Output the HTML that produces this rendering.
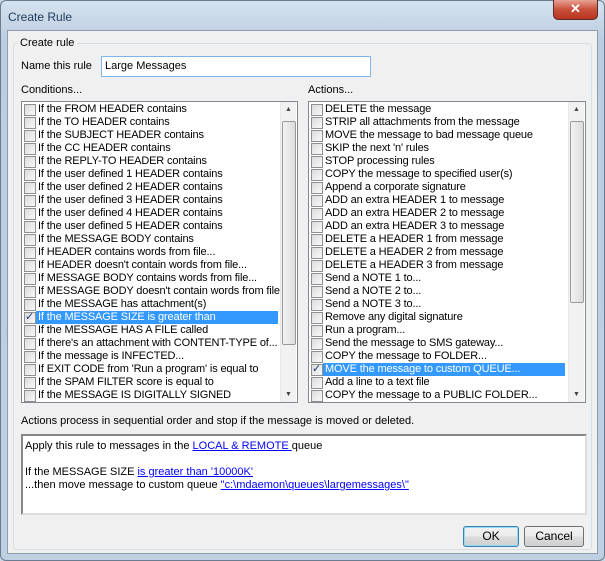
<!DOCTYPE html><html><head><style>
body{margin:0;width:605px;height:561px;overflow:hidden;background:#c9d7e6;font-family:"Liberation Sans",sans-serif;font-size:11px;color:#000}
.win{position:absolute;left:0;top:0;width:603px;height:559px;border:1px solid #6b7c8e;border-radius:6px;background:linear-gradient(#d5e2ef,#bccde0 40px,#bfd0e2);}
.title{position:absolute;left:8px;top:10px;font-size:12px;color:#1e395b}
.close{position:absolute;left:553px;top:0;width:43px;height:19px;border:1px solid #5a2a2a;border-top:none;border-radius:0 0 5px 5px;background:linear-gradient(#e8a293,#c9503b 50%,#b6341f);color:#fff;text-align:center;font-weight:bold;font-size:13px;line-height:18px}
.client{position:absolute;left:7px;top:30px;width:589px;height:522px;background:#f0f0f0;border:1px solid #8d9cae}
.a{position:absolute}
.gb{position:absolute;left:5px;top:12px;width:577px;height:505px;border:1px solid #d5dfe5;border-radius:3px}
.lst{position:absolute;background:#fff;border:1px solid #828790;overflow:hidden}
.row{height:13px;line-height:13px;white-space:nowrap;position:relative;padding-left:16px;letter-spacing:-0.15px}
.row:before{content:"";position:absolute;left:2px;top:1px;width:10px;height:10px;border:1px solid #8f8f8f;background:linear-gradient(135deg,#dcdcdc,#f8f8f8)}
.sel{background:#3399ff;color:#fff}
.chk:after{content:"✓";position:absolute;left:3px;top:0;color:#1c3a78;font-size:11px;line-height:13px}
.sb{position:absolute;top:0;width:15px;bottom:0;background:#f1f1f1;border-left:1px solid #e8e8e8}
.thumb{position:absolute;left:1px;width:12px;border:1px solid #999;border-radius:2px;background:linear-gradient(90deg,#f3f3f3,#dcdcdc)}
.ar{position:absolute;left:0;width:15px;text-align:center;font-size:7px;color:#444}
a{color:#0000ff;text-decoration:underline}
.btn{position:absolute;height:19px;border:1px solid #707070;border-radius:3px;background:linear-gradient(#f2f2f2,#ebebeb 50%,#dddddd 51%,#cfcfcf);text-align:center;line-height:19px;font-size:12px}
</style></head><body>
<div class="win"></div>
<div class="title">Create Rule</div>
<div class="close">✕</div>
<div class="client">
<div class="gb"></div>
<div class="a" style="left:9px;top:6px;background:#f0f0f0;padding:0 3px;font-size:11px">Create rule</div>
<div class="a" style="left:13px;top:29px">Name this rule</div>
<div class="a" style="left:93px;top:25px;width:265px;height:19px;background:#fff;border:1px solid #7eb4ea;line-height:19px;padding-left:3px">Large Messages</div>
<div class="a" style="left:13px;top:53px">Conditions...</div>
<div class="a" style="left:300px;top:53px">Actions...</div>
<div class="lst" style="left:13px;top:70px;width:275px;height:300px">
<div style="padding-top:1px">
<div class="row">If the FROM HEADER contains</div><div class="row">If the TO HEADER contains</div><div class="row">If the SUBJECT HEADER contains</div><div class="row">If the CC HEADER contains</div><div class="row">If the REPLY-TO HEADER contains</div><div class="row">If the user defined 1 HEADER contains</div><div class="row">If the user defined 2 HEADER contains</div><div class="row">If the user defined 3 HEADER contains</div><div class="row">If the user defined 4 HEADER contains</div><div class="row">If the user defined 5 HEADER contains</div><div class="row">If the MESSAGE BODY contains</div><div class="row">If HEADER contains words from file...</div><div class="row">If HEADER doesn't contain words from file...</div><div class="row">If MESSAGE BODY contains words from file...</div><div class="row">If MESSAGE BODY doesn't contain words from file</div><div class="row">If the MESSAGE has attachment(s)</div><div class="row chk"><span class="sel" style="display:block;margin-left:-2px;padding-left:2px;width:240px">If the MESSAGE SIZE is greater than</span></div><div class="row">If the MESSAGE HAS A FILE called</div><div class="row">If there's an attachment with CONTENT-TYPE of...</div><div class="row">If the message is INFECTED...</div><div class="row">If EXIT CODE from 'Run a program' is equal to</div><div class="row">If the SPAM FILTER score is equal to</div><div class="row">If the MESSAGE IS DIGITALLY SIGNED</div>
</div>
<div class="sb" style="left:258px"><div class="ar" style="top:4px">▲</div><div class="thumb" style="top:19px;height:222px"></div><div class="ar" style="bottom:4px">▼</div></div>
</div>
<div class="lst" style="left:300px;top:70px;width:276px;height:300px">
<div style="padding-top:1px">
<div class="row">DELETE the message</div><div class="row">STRIP all attachments from the message</div><div class="row">MOVE the message to bad message queue</div><div class="row">SKIP the next 'n' rules</div><div class="row">STOP processing rules</div><div class="row">COPY the message to specified user(s)</div><div class="row">Append a corporate signature</div><div class="row">ADD an extra HEADER 1 to message</div><div class="row">ADD an extra HEADER 2 to message</div><div class="row">ADD an extra HEADER 3 to message</div><div class="row">DELETE a HEADER 1 from message</div><div class="row">DELETE a HEADER 2 from message</div><div class="row">DELETE a HEADER 3 from message</div><div class="row">Send a NOTE 1 to...</div><div class="row">Send a NOTE 2 to...</div><div class="row">Send a NOTE 3 to...</div><div class="row">Remove any digital signature</div><div class="row">Run a program...</div><div class="row">Send the message to SMS gateway...</div><div class="row">COPY the message to FOLDER...</div><div class="row chk"><span class="sel" style="display:block;margin-left:-2px;padding-left:2px;width:240px">MOVE the message to custom QUEUE...</span></div><div class="row">Add a line to a text file</div><div class="row">COPY the message to a PUBLIC FOLDER...</div>
</div>
<div class="sb" style="left:259px"><div class="ar" style="top:4px">▲</div><div class="thumb" style="top:19px;height:180px"></div><div class="ar" style="bottom:4px">▼</div></div>
</div>
<div class="a" style="left:13px;top:384px">Actions process in sequential order and stop if the message is moved or deleted.</div>
<div class="a" style="left:13px;top:403px;width:560px;height:77px;background:#fff;border:2px solid #888;border-right-color:#ddd;border-bottom-color:#ddd;line-height:13px;padding-left:2px">
<div style="margin-top:4px">Apply this rule to messages in the <a>LOCAL &amp; REMOTE </a> queue</div>
<div style="height:13px"></div>
<div>If the MESSAGE SIZE <a>is greater than '10000K'</a></div>
<div>...then move message to custom queue <a>"c:\mdaemon\queues\largemessages\"</a></div>
</div>
<div class="btn" style="left:455px;top:495px;width:54px;border-color:#3c7fb1;box-shadow:inset 0 0 0 1px #8fdcf8">OK</div>
<div class="btn" style="left:516px;top:495px;width:58px">Cancel</div>
</div>
</body></html>
